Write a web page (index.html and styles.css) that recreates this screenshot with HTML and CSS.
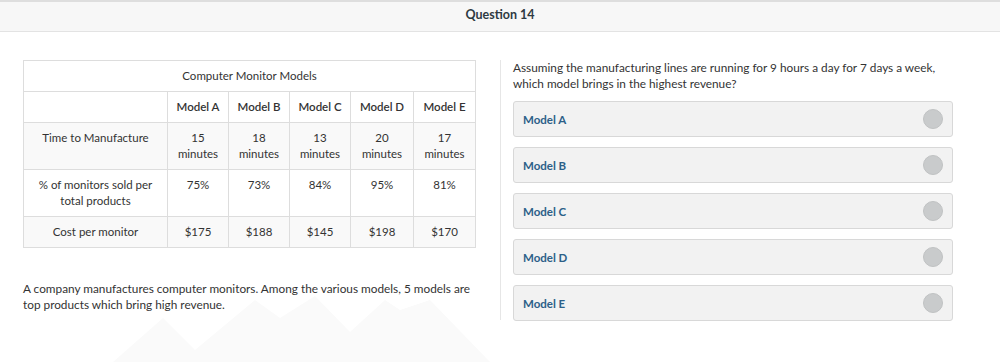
FILE: index.html
```html
<html>
<head>
    <title>Question 14</title>
    <link rel="stylesheet" href="styles.css">
</head>
<body>
    <div class="topbar">Question 14</div>
    <svg class="hills" width="1000" height="362" viewBox="0 0 1000 362">
        <path d="M113 362 L163 318 L195 350 L255 300 L280 318 L315 296 L350 332 L385 300 L400 310 L430 300 L490 362 Z" fill="#fafafa" />
    </svg>
    <div class="main">
        <div class="leftcol">
            <table class="datatable">
                <tr class="white">
                    <td colspan="6">Computer Monitor Models</td>
                </tr>
                <tr class="white heads">
                    <td class="first"></td>
                    <td class="ca">Model A</td>
                    <td class="cb">Model B</td>
                    <td class="cc">Model C</td>
                    <td class="cd">Model D</td>
                    <td>Model E</td>
                </tr>
                <tr class="grey">
                    <td>Time to Manufacture</td>
                    <td>15<br>minutes</td>
                    <td>18<br>minutes</td>
                    <td>13<br>minutes</td>
                    <td>20<br>minutes</td>
                    <td>17<br>minutes</td>
                </tr>
                <tr class="white">
                    <td>% of monitors sold per<br>total products</td>
                    <td>75%</td>
                    <td>73%</td>
                    <td>84%</td>
                    <td>95%</td>
                    <td>81%</td>
                </tr>
                <tr class="grey">
                    <td>Cost per monitor</td>
                    <td>$175</td>
                    <td>$188</td>
                    <td>$145</td>
                    <td>$198</td>
                    <td>$170</td>
                </tr>
            </table>
            <p class="passage">A company manufactures computer monitors. Among the various models, 5 models are top products which bring high revenue.</p>
        </div>
        <div class="rightcol">
            <p class="question">Assuming the manufacturing lines are running for 9 hours a day for 7 days a week, which model brings in the highest revenue?</p>
            <div class="option"><span>Model A</span><i class="radio"></i></div>
            <div class="option"><span>Model B</span><i class="radio"></i></div>
            <div class="option"><span>Model C</span><i class="radio"></i></div>
            <div class="option"><span>Model D</span><i class="radio"></i></div>
            <div class="option"><span>Model E</span><i class="radio"></i></div>
        </div>
    </div>
</body>
</html>
```

FILE: styles.css
```css
* {
    margin: 0px;
    box-sizing: border-box;
}

body {
    background: #ffffff;
    font-family: Lato, "Liberation Sans", sans-serif;
    color: #333333;
    position: relative;
    height: 362px;
    overflow: hidden;
}

.hills {
    position: absolute;
    top: 0;
    left: 0;
    z-index: 0;
}

.topbar {
    height: 32px;
    border-top: 2px solid #dedede;
    border-bottom: 1px solid #e3e3e3;
    background: #f7f7f7;
    text-align: center;
    font-size: 12.5px;
    font-weight: 700;
    line-height: 26px;
    color: #2e3a42;
    position: relative;
    z-index: 1;
}

.main {
    display: flex;
    padding-top: 28px;
    position: relative;
    z-index: 1;
}

.leftcol {
    width: 501px;
    padding-left: 23px;
    padding-right: 25px;
    border-right: 1px solid #e6e6e6;
    height: 260px;
}

.datatable {
    width: 453px;
    border-collapse: collapse;
    font-size: 11.5px;
    line-height: 16px;
    text-align: center;
}

.datatable td {
    border: 1px solid #dddddd;
    padding: 7px 4px 7px 4px;
    vertical-align: top;
}

.heads td {
    font-weight: 600;
}

.datatable .first {
    width: 144px;
}

.datatable .ca, .datatable .cb, .datatable .cc {
    width: 61px;
}

.datatable .cd {
    width: 63px;
}

.white {
    background: #ffffff;
}

.grey {
    background: #f9f9f9;
}

.passage {
    margin-top: 33px;
    font-size: 11.8px;
    line-height: 16px;
}

.rightcol {
    padding-left: 12px;
    width: 452px;
}

.question {
    font-size: 11.8px;
    line-height: 16px;
    margin-bottom: 9px;
}

.option {
    display: flex;
    align-items: center;
    justify-content: space-between;
    height: 36px;
    margin-bottom: 10px;
    padding: 0 9px;
    background: #f2f2f2;
    border: 1px solid #d8d8d8;
    border-radius: 3px;
    font-size: 11.5px;
    font-weight: 700;
    color: #2c6088;
}

.radio {
    width: 20px;
    height: 20px;
    border-radius: 50%;
    background: #c9cbcc;
    border: 1px solid #c0c2c3;
}
```
